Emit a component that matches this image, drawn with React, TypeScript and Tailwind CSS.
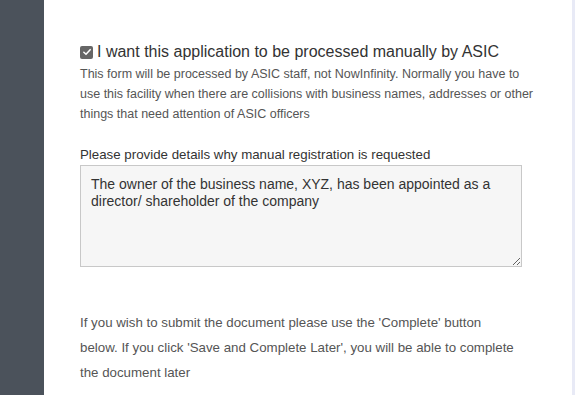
import React from "react";

const App: React.FC = () => {
  return (
    <div
      className="flex h-[395px] w-[575px] overflow-hidden bg-white"
      style={{ fontFamily: '"Liberation Sans", Arial, sans-serif' }}
    >
      <div className="w-[44px] shrink-0 bg-[#4b525b]" />
      <div className="flex flex-1 flex-col pl-[36px] pt-[43px]">
        <div className="flex items-center gap-[4px]">
          <span className="flex h-[13px] w-[13px] items-center justify-center rounded-[2px] bg-[#666666]">
            <svg viewBox="0 0 12 12" className="h-[10px] w-[10px]">
              <path
                d="M2.2 6.3 L4.8 8.8 L9.8 3.2"
                fill="none"
                stroke="white"
                strokeWidth="1.8"
                strokeLinecap="round"
                strokeLinejoin="round"
              />
            </svg>
          </span>
          <span className="text-[16px] leading-[18px] text-[#333333]">
            I want this application to be processed manually by ASIC
          </span>
        </div>
        <p className="mt-[3px] whitespace-nowrap text-[12.5px] leading-[20px] text-[#555555]">
          This form will be processed by ASIC staff, not NowInfinity. Normally
          you have to
          <br />
          use this facility when there are collisions with business names,
          addresses or other
          <br />
          things that need attention of ASIC officers
        </p>
        <p className="mt-[21px] text-[13.3px] leading-[20px] text-[#333333]">
          Please provide details why manual registration is requested
        </p>
        <textarea
          className="h-[102px] w-[442px] resize-y border border-[#c8c8c8] bg-[#f6f6f6] px-[10px] pt-[10px] pb-[8px] text-[14px] leading-[17px] text-[#333333] outline-none"
          defaultValue="The owner of the business name, XYZ, has been appointed as a director/ shareholder of the company"
          style={{ fontFamily: '"Liberation Sans", Arial, sans-serif' }}
        />
        <p className="mt-[43px] whitespace-nowrap text-[13.3px] leading-[25px] text-[#555555]">
          If you wish to submit the document please use the 'Complete' button
          <br />
          below. If you click 'Save and Complete Later', you will be able to
          complete
          <br />
          the document later
        </p>
      </div>
      <div className="w-[3px] shrink-0 bg-[#e8eaf6]" />
    </div>
  );
};

export default App;
